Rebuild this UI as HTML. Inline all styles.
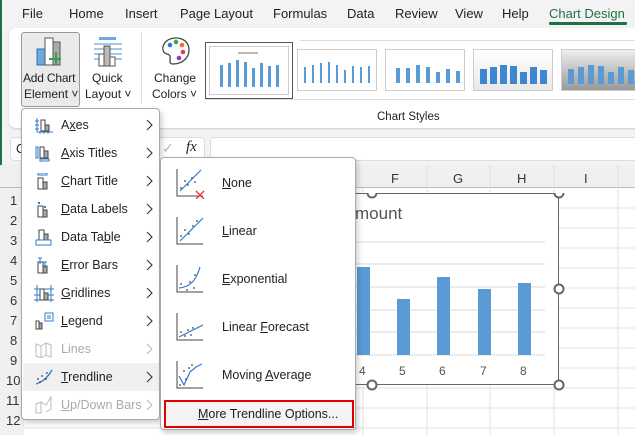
<!DOCTYPE html>
<html><head><meta charset="utf-8"><style>
*{box-sizing:border-box;margin:0;padding:0}
body{width:635px;height:435px;overflow:hidden;background:#f3f3f3;font-family:"Liberation Sans",sans-serif;color:#222;position:relative;font-size:12.5px}
.a{position:absolute}
.tab{position:absolute;top:6px;font-size:13px;color:#222}
u{text-decoration:underline}
.mi{position:absolute;left:0;width:139px;height:28px}
.mi span{position:absolute;left:39px;top:7px}
.mi .ar{position:absolute;left:124px;top:8px}
.dis{color:#aaa}
.si{position:absolute;left:0;width:196px;height:48px}
.si span{position:absolute;left:61px;top:17px}
.si svg{position:absolute;left:15px;top:10px}
</style></head><body>
<div class="a" style="left:0;top:0;width:2px;height:435px;background:#1e7145"></div>
<div class="tab" style="left:22px">File</div>
<div class="tab" style="left:69px">Home</div>
<div class="tab" style="left:125px">Insert</div>
<div class="tab" style="left:180px">Page Layout</div>
<div class="tab" style="left:273px">Formulas</div>
<div class="tab" style="left:347px">Data</div>
<div class="tab" style="left:395px">Review</div>
<div class="tab" style="left:455px">View</div>
<div class="tab" style="left:502px">Help</div>
<div class="tab" style="left:549px;color:#1e7145">Chart Design</div>
<div class="a" style="left:549px;top:22px;width:78px;height:3px;background:#1e7145;border-radius:1px"></div>

<!-- ribbon -->
<div class="a" style="left:9px;top:28px;width:640px;height:100px;background:#fff;border-radius:7px;box-shadow:0 1px 2px #ccc"></div>
<div class="a" style="left:300px;top:40px;width:335px;height:1px;background:#ddd"></div>
<div class="a" style="left:205px;top:99px;width:430px;height:1px;background:#ddd"></div>
<div class="a" style="left:377px;top:111px;font-size:11.5px">Chart Styles</div>
<div class="a" style="left:21px;top:32px;width:59px;height:75px;background:#eaeaea;border:1px solid #999;border-radius:3px"></div>
<svg class="a" style="left:35px;top:36px" width="32" height="30"><rect x="2" y="13" width="8" height="16" fill="#6fa8dc" stroke="#2c6fb5"/><rect x="10" y="2" width="8" height="27" fill="#fff" stroke="#555"/><rect x="18" y="6" width="7" height="23" fill="#aaa" stroke="#555"/><path d="M21 16v13M14 23h12" stroke="#2ea44f" stroke-width="2"/></svg>
<div class="a" style="left:23px;top:71px;font-size:12px;letter-spacing:-0.2px">Add Chart</div>
<div class="a" style="left:24px;top:87px;font-size:12px">Element ˅</div>
<svg class="a" style="left:93px;top:37px" width="30" height="30"><rect x="6" y="0" width="17" height="3" fill="#6fa8dc"/><path d="M1 7h28M1 12h28M1 17h28M1 22h28" stroke="#4a90d9"/><rect x="6" y="17" width="5" height="12" fill="#fff" stroke="#555"/><rect x="11" y="9" width="6" height="20" fill="#bbb" stroke="#555"/><rect x="17" y="20" width="5" height="9" fill="#fff" stroke="#555"/></svg>
<div class="a" style="left:92px;top:71px;font-size:12px">Quick</div>
<div class="a" style="left:85px;top:87px;font-size:12px">Layout ˅</div>
<div class="a" style="left:141px;top:33px;width:1px;height:70px;background:#ddd"></div>
<svg class="a" style="left:161px;top:36px" width="30" height="30"><path d="M15 2C6 2 1 8 2 14c1 5 6 3 7 6 1 4-2 8 3 8 9 0 16-6 16-14C28 6 22 2 15 2z" fill="#fff" stroke="#444" stroke-width="1.3"/><circle cx="9" cy="9" r="2.3" fill="#2e75d6"/><circle cx="15" cy="6" r="2.3" fill="#3aa655"/><circle cx="21" cy="9" r="2.3" fill="#e8742a"/><circle cx="22" cy="16" r="2.3" fill="#e04040"/><circle cx="18" cy="22" r="2.3" fill="#8b3fb0"/></svg>
<div class="a" style="left:154px;top:71px;font-size:12px">Change</div>
<div class="a" style="left:152px;top:87px;font-size:12px">Colors ˅</div>
<!-- gallery -->
<div class="a" style="left:205px;top:42px;width:88px;height:57px;border:1px solid #555;background:#fff"><div class="a" style="left:3px;top:3px;width:80px;height:49px;border:1px solid #ccc"></div>
<svg class="a" style="left:4px;top:4px" width="78" height="47"><rect x="28" y="5" width="20" height="2" fill="#bbb"/><g fill="#5b9bd5"><rect x="10" y="18" width="3" height="22"/><rect x="18" y="16" width="3" height="24"/><rect x="26" y="13" width="3" height="27"/><rect x="34" y="15" width="3" height="25"/><rect x="42" y="21" width="3" height="19"/><rect x="50" y="16" width="3" height="24"/><rect x="58" y="19" width="3" height="21"/><rect x="66" y="18" width="3" height="22"/></g></svg></div>
<div class="a" style="left:297px;top:49px;width:80px;height:42px;border:1px solid #ccc;background:#fff"><svg width="78" height="40"><g fill="#5b9bd5"><rect x="6" y="17" width="2" height="16"/><rect x="14" y="15" width="2" height="18"/><rect x="22" y="13" width="2" height="20"/><rect x="30" y="12" width="2" height="21"/><rect x="38" y="15" width="2" height="18"/><rect x="46" y="20" width="2" height="13"/><rect x="54" y="16" width="2" height="17"/><rect x="62" y="17" width="2" height="16"/><rect x="70" y="16" width="2" height="17"/></g></svg></div>
<div class="a" style="left:385px;top:49px;width:80px;height:42px;border:1px solid #ccc;background:#fff"><svg width="78" height="40"><g fill="#5b9bd5"><rect x="10" y="18" width="4" height="15"/><rect x="20" y="18" width="4" height="15"/><rect x="30" y="15" width="4" height="18"/><rect x="40" y="17" width="4" height="16"/><rect x="50" y="22" width="4" height="11"/><rect x="60" y="19" width="4" height="14"/><rect x="70" y="21" width="4" height="12"/></g></svg></div>
<div class="a" style="left:473px;top:49px;width:80px;height:42px;border:1px solid #ccc;background:linear-gradient(#fff,#e8e8e8)"><svg width="78" height="40"><g fill="#3f86d0"><rect x="6" y="19" width="7" height="15"/><rect x="16" y="17" width="7" height="17"/><rect x="26" y="15" width="7" height="19"/><rect x="36" y="16" width="7" height="18"/><rect x="46" y="22" width="7" height="12"/><rect x="56" y="17" width="7" height="17"/><rect x="66" y="20" width="7" height="14"/></g></svg></div>
<div class="a" style="left:561px;top:49px;width:80px;height:42px;border:1px solid #ccc;background:linear-gradient(#eee,#999)"><svg width="78" height="40"><g fill="#5b9bd5"><rect x="6" y="19" width="6" height="15"/><rect x="16" y="17" width="6" height="17"/><rect x="26" y="15" width="6" height="19"/><rect x="36" y="16" width="6" height="18"/><rect x="46" y="22" width="6" height="12"/><rect x="56" y="17" width="6" height="17"/><rect x="66" y="20" width="6" height="14"/></g></svg></div>

<!-- formula bar -->
<div class="a" style="left:10px;top:137px;width:195px;height:24px;background:#fff;border:1px solid #ddd;border-radius:4px"></div>
<div class="a" style="left:16px;top:142px">C</div>
<div class="a" style="left:162px;top:140px;color:#bbb;font-size:14px">✓</div>
<div class="a" style="left:186px;top:139px;font-family:'Liberation Serif',serif;font-style:italic;font-size:15px">fx</div>
<div class="a" style="left:210px;top:137px;width:430px;height:24px;background:#fff;border:1px solid #ddd;border-radius:4px"></div>

<!-- grid -->
<div class="a" style="left:0;top:165px;width:635px;height:270px;background:#fff"></div>
<div class="a" style="left:0;top:165px;width:635px;height:23px;background:#f0f0f0;border-bottom:1px solid #bbb"></div>
<div class="a" style="left:0;top:188px;width:24px;height:247px;background:#f0f0f0"></div>
<svg class="a" style="left:0;top:165px" width="635" height="270">
<g stroke="#e0e0e0"><path d="M24 43h611M24 63h611M24 83h611M24 103h611M24 123h611M24 143h611M24 163h611M24 183h611M24 203h611M24 223h611M24 243h611M24 263h611"/><path d="M363 23v247M427 0v270M490 0v270M554 0v270M618 0v270"/></g>
<g font-family="Liberation Sans" font-size="13" fill="#333"><text x="391" y="18">F</text><text x="453" y="18">G</text><text x="517" y="18">H</text><text x="584" y="18">I</text>
<text x="10" y="40">1</text><text x="10" y="60">2</text><text x="10" y="80">3</text><text x="10" y="100">4</text><text x="10" y="120">5</text><text x="10" y="140">6</text><text x="10" y="160">7</text><text x="10" y="180">8</text><text x="10" y="200">9</text><text x="6" y="220">10</text><text x="6" y="240">11</text><text x="6" y="260">12</text></g>
</svg>
<!-- chart -->
<div class="a" style="left:300px;top:193px;width:259px;height:192px;background:#fff;border:1px solid #666"></div>
<div class="a" style="left:355px;top:204px;font-size:17px;color:#555">mount</div>
<svg class="a" style="left:300px;top:193px" width="270" height="200">
<g stroke="#d9d9d9"><path d="M0 49h245M0 71h245M0 94h245M0 117h245M0 139h245M0 162h245"/></g>
<g fill="#5b9bd5"><rect x="57" y="74" width="13" height="88"/><rect x="97" y="106" width="13" height="56"/><rect x="137" y="84" width="13" height="78"/><rect x="178" y="96" width="13" height="66"/><rect x="218" y="90" width="13" height="72"/></g>
<g font-family="Liberation Sans" font-size="12" fill="#555"><text x="59" y="182">4</text><text x="99" y="182">5</text><text x="139" y="182">6</text><text x="180" y="182">7</text><text x="220" y="182">8</text></g>
<g fill="#fff" stroke="#666" stroke-width="2"><circle cx="72" cy="0" r="4.5"/><circle cx="259" cy="0" r="4.5"/><circle cx="259" cy="96" r="4.5"/><circle cx="72" cy="192" r="4.5"/><circle cx="259" cy="192" r="4.5"/></g>
</svg>

<!-- menu 1 -->
<div class="a" style="left:21px;top:108px;width:139px;height:312px;background:#fff;border:1px solid #aaa;border-radius:4px;box-shadow:2px 3px 6px rgba(0,0,0,.2)">
<div class="mi" style="top:2px"><svg class="a" style="left:13px;top:7px" width="18" height="16"><path d="M2 0v14M0 3h4M0 7h4M0 11h4M2 14h16M5 14v2M9 14v2M13 14v2" stroke="#2c7bd0"/><rect x="6" y="2" width="4" height="11" fill="#fff" stroke="#444"/><rect x="10" y="7" width="4" height="6" fill="#aaa" stroke="#444"/></svg><span>A<u>x</u>es</span><svg class="ar" width="8" height="12"><path d="M1 1l5 5-5 5" fill="none" stroke="#333" stroke-width="1.1"/></svg></div>
<div class="mi" style="top:30px"><svg class="a" style="left:13px;top:7px" width="18" height="16"><rect x="1" y="1" width="2" height="11" fill="none" stroke="#2c7bd0"/><rect x="5" y="1" width="4" height="11" fill="#fff" stroke="#444"/><rect x="9" y="5" width="4" height="7" fill="#aaa" stroke="#444"/><rect x="5" y="13" width="9" height="2" fill="none" stroke="#2c7bd0"/></svg><span><u>A</u>xis Titles</span><svg class="ar" width="8" height="12"><path d="M1 1l5 5-5 5" fill="none" stroke="#333" stroke-width="1.1"/></svg></div>
<div class="mi" style="top:58px"><svg class="a" style="left:13px;top:6px" width="18" height="17"><rect x="3" y="0" width="9" height="2" fill="none" stroke="#2c7bd0"/><rect x="3" y="5" width="5" height="11" fill="#fff" stroke="#444"/><rect x="8" y="9" width="4" height="7" fill="#aaa" stroke="#444"/></svg><span><u>C</u>hart Title</span><svg class="ar" width="8" height="12"><path d="M1 1l5 5-5 5" fill="none" stroke="#333" stroke-width="1.1"/></svg></div>
<div class="mi" style="top:86px"><svg class="a" style="left:13px;top:6px" width="18" height="17"><rect x="3" y="1" width="2" height="2" fill="#2c7bd0"/><rect x="9" y="5" width="2" height="2" fill="#2c7bd0"/><rect x="3" y="5" width="5" height="11" fill="#fff" stroke="#444"/><rect x="8" y="9" width="4" height="7" fill="#aaa" stroke="#444"/></svg><span><u>D</u>ata Labels</span><svg class="ar" width="8" height="12"><path d="M1 1l5 5-5 5" fill="none" stroke="#333" stroke-width="1.1"/></svg></div>
<div class="mi" style="top:114px"><svg class="a" style="left:13px;top:6px" width="18" height="17"><rect x="4" y="1" width="5" height="10" fill="#fff" stroke="#444"/><rect x="9" y="5" width="4" height="6" fill="#aaa" stroke="#444"/><rect x="1" y="11" width="15" height="5" fill="none" stroke="#2c7bd0"/></svg><span>Data Ta<u>b</u>le</span><svg class="ar" width="8" height="12"><path d="M1 1l5 5-5 5" fill="none" stroke="#333" stroke-width="1.1"/></svg></div>
<div class="mi" style="top:142px"><svg class="a" style="left:13px;top:6px" width="18" height="17"><rect x="3" y="5" width="5" height="11" fill="#fff" stroke="#444"/><rect x="8" y="9" width="4" height="7" fill="#aaa" stroke="#444"/><path d="M5 1v6M3 1h4M10 5v6M8 5h4" stroke="#2c7bd0"/></svg><span><u>E</u>rror Bars</span><svg class="ar" width="8" height="12"><path d="M1 1l5 5-5 5" fill="none" stroke="#333" stroke-width="1.1"/></svg></div>
<div class="mi" style="top:170px"><svg class="a" style="left:12px;top:6px" width="20" height="17"><path d="M0 4h20M0 10h20M0 15h20M3 0v17M17 0v17" stroke="#2c7bd0"/><rect x="6" y="4" width="4" height="11" fill="#fff" stroke="#444"/><rect x="10" y="8" width="4" height="7" fill="#aaa" stroke="#444"/></svg><span><u>G</u>ridlines</span><svg class="ar" width="8" height="12"><path d="M1 1l5 5-5 5" fill="none" stroke="#333" stroke-width="1.1"/></svg></div>
<div class="mi" style="top:198px"><svg class="a" style="left:13px;top:5px" width="20" height="18"><rect x="1" y="9" width="3" height="8" fill="#fff" stroke="#444"/><rect x="4" y="11" width="3" height="6" fill="#aaa" stroke="#444"/><rect x="10" y="1" width="8" height="8" fill="none" stroke="#2c7bd0"/><path d="M12 4h4M12 6h4" stroke="#2c7bd0"/></svg><span><u>L</u>egend</span><svg class="ar" width="8" height="12"><path d="M1 1l5 5-5 5" fill="none" stroke="#333" stroke-width="1.1"/></svg></div>
<div class="mi dis" style="top:226px"><svg class="a" style="left:13px;top:6px" width="18" height="17"><path d="M1 3l5 2 5-3 5 2v12l-5-2-5 3-5-2z M6 5v12M11 2v12" fill="none" stroke="#bbb"/></svg><span>Lines</span><svg class="ar" width="8" height="12"><path d="M1 1l5 5-5 5" fill="none" stroke="#bbb" stroke-width="1.1"/></svg></div>
<div class="mi" style="top:254px;left:1px;width:136px;background:#f0f0f0"><svg class="a" style="left:12px;top:6px" width="20" height="17"><path d="M1 15C8 13 13 8 17 1" fill="none" stroke="#2c7bd0" stroke-width="1.3"/><g fill="#444"><circle cx="3" cy="10" r=".9"/><circle cx="7" cy="7" r=".9"/><circle cx="11" cy="10" r=".9"/><circle cx="12" cy="4" r=".9"/><circle cx="5" cy="13" r=".9"/></g></svg><span style="left:38px"><u>T</u>rendline</span><svg class="ar" style="left:123px" width="8" height="12"><path d="M1 1l5 5-5 5" fill="none" stroke="#333" stroke-width="1.1"/></svg></div>
<div class="mi dis" style="top:282px"><svg class="a" style="left:13px;top:5px" width="18" height="18"><path d="M1 8l5-2v11l-5 0zM6 6l5 3 5-8v12l-5 3" fill="none" stroke="#bbb"/></svg><span><u>U</u>p/Down Bars</span><svg class="ar" width="8" height="12"><path d="M1 1l5 5-5 5" fill="none" stroke="#bbb" stroke-width="1.1"/></svg></div>
</div>

<!-- submenu -->
<div class="a" style="left:160px;top:157px;width:196px;height:273px;background:#fff;border:1px solid #aaa;border-radius:4px;box-shadow:2px 3px 6px rgba(0,0,0,.2)">
<div class="si" style="top:1px"><svg width="32" height="30"><path d="M1 0v27h26" fill="none" stroke="#444"/><path d="M4 22L25 1" stroke="#2c7bd0" stroke-width="1.2"/><g fill="#444"><circle cx="5" cy="19" r=".9"/><circle cx="9" cy="12" r=".9"/><circle cx="12" cy="16" r=".9"/><circle cx="16" cy="9" r=".9"/><circle cx="19" cy="13" r=".9"/></g><path d="M20 22l8 8M28 22l-8 8" stroke="#e33" stroke-width="1.3"/></svg><span><u>N</u>one</span></div>
<div class="si" style="top:49px"><svg width="32" height="30"><path d="M1 0v27h26" fill="none" stroke="#444"/><path d="M4 24L27 1" stroke="#2c7bd0" stroke-width="1.2"/><g fill="#444"><circle cx="5" cy="19" r=".9"/><circle cx="9" cy="13" r=".9"/><circle cx="13" cy="17" r=".9"/><circle cx="17" cy="9" r=".9"/><circle cx="21" cy="4" r=".9"/></g></svg><span><u>L</u>inear</span></div>
<div class="si" style="top:97px"><svg width="32" height="30"><path d="M1 0v27h26" fill="none" stroke="#444"/><path d="M3 23C14 22 20 16 24 2" fill="none" stroke="#2c7bd0" stroke-width="1.2"/><g fill="#444"><circle cx="5" cy="19" r=".9"/><circle cx="11" cy="25" r=".9"/><circle cx="14" cy="17" r=".9"/><circle cx="18" cy="23" r=".9"/><circle cx="19" cy="10" r=".9"/></g></svg><span><u>E</u>xponential</span></div>
<div class="si" style="top:145px"><svg width="32" height="30"><path d="M1 0v27h26" fill="none" stroke="#444"/><path d="M3 24L27 12" stroke="#2c7bd0" stroke-width="1.2"/><g fill="#444"><circle cx="5" cy="19" r=".9"/><circle cx="9" cy="23" r=".9"/><circle cx="12" cy="17" r=".9"/><circle cx="15" cy="22" r=".9"/><circle cx="17" cy="15" r=".9"/></g></svg><span>Linear <u>F</u>orecast</span></div>
<div class="si" style="top:193px"><svg width="32" height="30"><path d="M1 0v27h26" fill="none" stroke="#444"/><path d="M3 15L8 24 14 11 20 6 26 3" fill="none" stroke="#2c7bd0" stroke-width="1.2"/><g fill="#444"><circle cx="4" cy="24" r=".9"/><circle cx="10" cy="18" r=".9"/><circle cx="13" cy="7" r=".9"/><circle cx="16" cy="4" r=".9"/><circle cx="8" cy="10" r=".9"/></g></svg><span>Moving <u>A</u>verage</span></div>
<div class="a" style="left:3px;top:242px;width:190px;height:28px;background:#f3f3f3;border:2px solid #e00000"></div>
<div class="a" style="left:37px;top:249px"><u>M</u>ore Trendline Options...</div>
</div>
</body></html>
